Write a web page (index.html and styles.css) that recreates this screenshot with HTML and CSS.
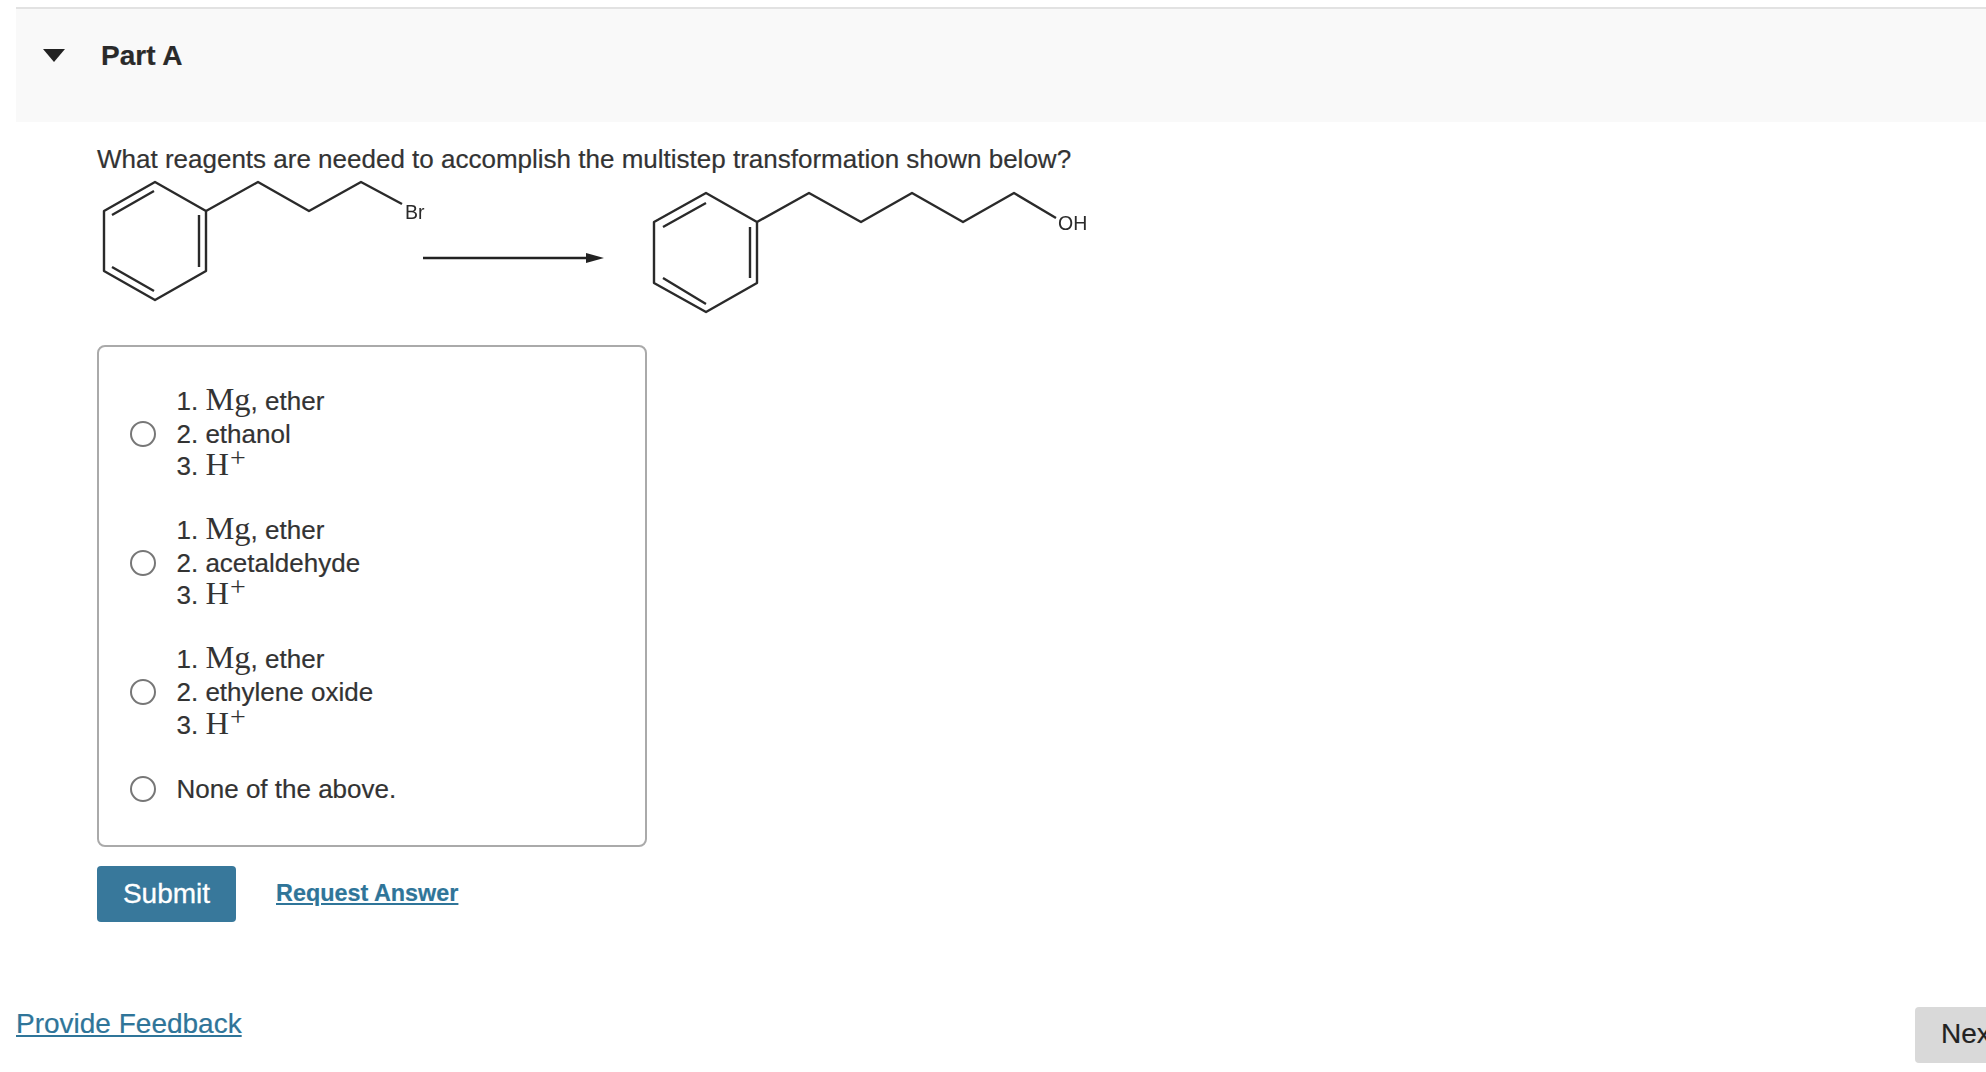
FILE: index.html
```html
<!DOCTYPE html>
<html lang="en">
<head>
<meta charset="utf-8">
<title>Part A</title>
<link rel="stylesheet" href="styles.css">
</head>
<body>
<div class="page">
  <header class="part-header">
    <span class="caret"></span>
    <h2 class="part-title">Part A</h2>
  </header>
  <main class="part-body">
    <p class="question">What reagents are needed to accomplish the multistep transformation shown below?</p>
    <svg class="molecule" viewBox="97 176 1003 146" width="1003" height="146" role="img" aria-label="Reaction scheme">
      <g class="bonds">
        <path d="M155 182L206 211V271L155 300L104 271V211Z"/>
        <path d="M112 215L154 191M199 215V267M112 267L154 291"/>
        <path d="M206 211L258 182L309 211L361 182L402 204"/>
        <path class="arrow-line" d="M423 258H590"/>
        <path d="M706 193L757 222V283L706 312L654 283V222Z"/>
        <path d="M663 227L706 203M750 227V278M663 278L706 304"/>
        <path d="M757 222L809 193L861 222L912 193L963 222L1014 193L1056 218"/>
      </g>
      <path class="arrow-head" d="M586 253L604 258L586 263Z"/>
      <text class="atom" x="405" y="219">Br</text>
      <text class="atom" x="1058" y="230">OH</text>
    </svg>
    <form class="choices">
      <label class="choice"><span class="radio"></span>
        <span class="choice-text"><span class="line">1. <span class="math">Mg</span>, ether</span><span class="line">2. ethanol</span><span class="line">3. <span class="math">H<sup>+</sup></span></span></span>
      </label>
      <label class="choice"><span class="radio"></span>
        <span class="choice-text"><span class="line">1. <span class="math">Mg</span>, ether</span><span class="line">2. acetaldehyde</span><span class="line">3. <span class="math">H<sup>+</sup></span></span></span>
      </label>
      <label class="choice"><span class="radio"></span>
        <span class="choice-text"><span class="line">1. <span class="math">Mg</span>, ether</span><span class="line">2. ethylene oxide</span><span class="line">3. <span class="math">H<sup>+</sup></span></span></span>
      </label>
      <label class="choice"><span class="radio"></span>
        <span class="choice-text"><span class="line">None of the above.</span></span>
      </label>
    </form>
    <div class="actions">
      <button class="submit" type="button">Submit</button>
      <a class="request" href="#">Request Answer</a>
    </div>
  </main>
  <footer class="footer">
    <a class="feedback" href="#">Provide Feedback</a>
    <button class="next" type="button">Next</button>
  </footer>
</div>
</body>
</html>
```
FILE: styles.css
```css
html, body {
  margin: 0;
  height: 100%;
  overflow: hidden;
  background: #fff;
}
body {
  font-family: "Liberation Sans", Arial, sans-serif;
  color: #333;
  -webkit-text-stroke: 0.2px currentColor;
}
.page {
  padding: 7px 0 0 16px;
}
.part-header {
  display: flex;
  align-items: flex-start;
  height: 113px;
  border-top: 2px solid #e2e2e2;
  background: #f9f9f9;
}
.caret {
  width: 0;
  height: 0;
  margin: 40px 0 0 27px;
  border-left: 11px solid transparent;
  border-right: 11px solid transparent;
  border-top: 13px solid #222;
}
.part-title {
  margin: 31px 0 0 36px;
  font-size: 28px;
  line-height: 32px;
  font-weight: 700;
  color: #2a2a2a;
}
.part-body {
  padding: 21px 0 0 81px;
}
.question {
  margin: 0 0 1px;
  font-size: 26px;
  line-height: 32px;
}
.molecule {
  display: block;
  filter: blur(0.6px);
}
.bonds path {
  fill: none;
  stroke: #2a2a2a;
  stroke-width: 2.4;
  stroke-linejoin: round;
}
.bonds .arrow-line {
  stroke: #222;
  stroke-width: 2.6;
}
.arrow-head {
  fill: #222;
}
.atom {
  font-size: 19.5px;
  fill: #2a2a2a;
}
.choices {
  box-sizing: border-box;
  display: flex;
  flex-direction: column;
  gap: 31.4px;
  width: 550px;
  height: 502px;
  margin-top: 23px;
  padding: 38px 0 0 31px;
  border: 2px solid #aaa;
  border-radius: 8px;
}
.choice {
  display: flex;
  align-items: center;
  gap: 20.5px;
  font-size: 26px;
}
.radio {
  box-sizing: border-box;
  flex: none;
  width: 26px;
  height: 26px;
  border: 2px solid #777;
  border-radius: 50%;
}
.choice-text {
  display: flex;
  flex-direction: column;
}
.line {
  display: block;
  height: 32.6px;
  line-height: 32.6px;
  white-space: nowrap;
}
.math {
  font-family: "Liberation Serif", "Times New Roman", serif;
  font-size: 32.5px;
  line-height: 0;
  -webkit-text-stroke: 0;
}
.math sup {
  font-size: 28px;
  line-height: 0;
  vertical-align: 8px;
  margin-left: 1px;
}
.actions {
  display: flex;
  align-items: center;
  gap: 40px;
  margin-top: 19px;
}
.submit {
  width: 139px;
  height: 56px;
  padding: 0;
  border: 0;
  border-radius: 4px;
  background: #38789b;
  color: #fff;
  font: 28px "Liberation Sans", Arial, sans-serif;
  -webkit-text-stroke: 0.3px #fff;
}
.request {
  margin-top: -2px;
  font-size: 23.4px;
  font-weight: 700;
  color: #2f7599;
}
.footer {
  display: flex;
  align-items: flex-start;
  justify-content: space-between;
  margin-top: 85px;
}
.feedback {
  margin-top: 1px;
  font-size: 28px;
  line-height: 32px;
  color: #2f7599;
}
.next {
  flex: none;
  box-sizing: border-box;
  width: 112px;
  height: 56px;
  margin-right: -41px;
  padding: 0 0 2px 26px;
  border: 0;
  border-radius: 4px;
  background: #d9d9d9;
  color: #222;
  text-align: left;
  font: 28px "Liberation Sans", Arial, sans-serif;
  -webkit-text-stroke: 0.2px #222;
}
```
